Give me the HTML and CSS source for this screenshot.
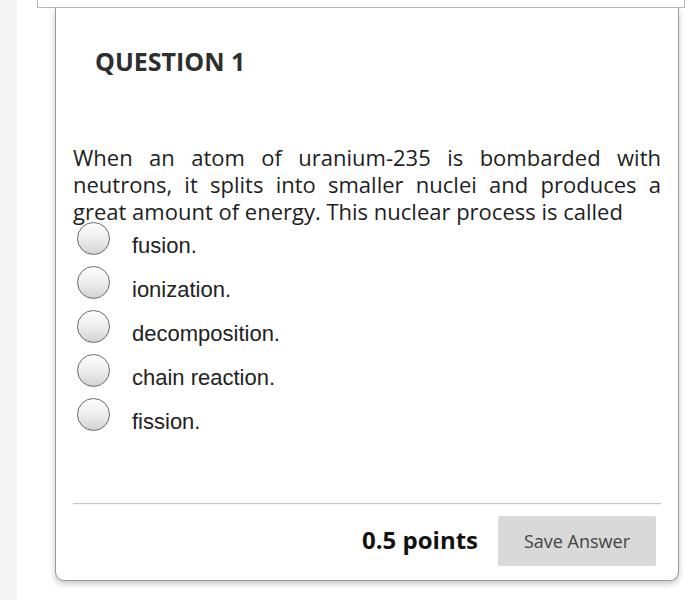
FILE: index.html
```html
<!DOCTYPE html>
<html lang="en">
<head>
<meta charset="utf-8">
<title>Question 1</title>
<link rel="stylesheet" href="styles.css">
</head>
<body>
<div class="page">
  <div class="rail"></div>
  <div class="content">
    <div class="topbox"></div>
    <div class="card">
      <h2 class="qtitle">QUESTION 1</h2>
      <p class="qtext">When an atom of uranium-235 is bombarded with neutrons, it splits into smaller nuclei and produces a great amount of energy. This nuclear process is called</p>
      <ul class="options">
        <li class="option"><span class="radio"></span><span class="label">fusion.</span></li>
        <li class="option"><span class="radio"></span><span class="label">ionization.</span></li>
        <li class="option"><span class="radio"></span><span class="label">decomposition.</span></li>
        <li class="option"><span class="radio"></span><span class="label">chain reaction.</span></li>
        <li class="option"><span class="radio"></span><span class="label">fission.</span></li>
      </ul>
      <div class="divider"></div>
      <div class="footer">
        <span class="points">0.5 points</span>
        <button class="save">Save Answer</button>
      </div>
    </div>
  </div>
</div>
</body>
</html>
```

FILE: styles.css
```css
html, body {
  margin: 0;
  padding: 0;
  background: #ffffff;
  overflow: hidden;
}

.page {
  display: flex;
  width: 700px;
  height: 604px;
}

.rail {
  width: 17px;
  flex: none;
  height: 600px;
  background: #f4f4f4;
}

.content {
  flex: 1;
  display: flex;
  flex-direction: column;
}

.topbox {
  box-sizing: border-box;
  margin-top: -50px;
  margin-left: 20px;
  width: 648px;
  height: 58px;
  border: 1px solid #b8b8b8;
  background: #ffffff;
}

.card {
  box-sizing: border-box;
  margin-left: 38px;
  width: 624px;
  height: 573px;
  border: 1px solid #9a9a9a;
  border-top: none;
  border-radius: 0 0 9px 9px;
  box-shadow: 0 3px 6px rgba(0, 0, 0, 0.22);
  padding: 0 17px;
  display: flex;
  flex-direction: column;
  background: #ffffff;
}

.qtitle {
  margin: 38px 0 0 22px;
  font-family: "Open Sans", sans-serif;
  font-weight: 700;
  font-size: 25px;
  line-height: 30px;
  color: #2e2e2e;
}

.qtext {
  margin: 68px 0 0 0;
  font-family: "Open Sans", sans-serif;
  font-size: 22px;
  line-height: 27px;
  color: #1e1e1e;
  text-align: justify;
}

.options {
  list-style: none;
  margin: -3px 0 0 0;
  padding: 0;
}

.option {
  display: flex;
  align-items: flex-start;
  height: 44px;
}

.radio {
  box-sizing: border-box;
  flex: none;
  width: 33px;
  height: 33px;
  margin-left: 4px;
  border: 1.5px solid #6a6a6a;
  border-radius: 50%;
  background: linear-gradient(to bottom, #ffffff 0%, #ebebeb 55%, #d2d2d2 100%);
}

.label {
  margin-left: 22px;
  padding-top: 11px;
  font-family: "Liberation Sans", Arial, sans-serif;
  font-size: 22px;
  line-height: 25px;
  color: #222222;
}

.divider {
  margin-top: 61px;
  height: 0;
  border-top: 1px solid #c6c6c6;
  border-bottom: 1px solid #f3f3f3;
}

.footer {
  display: flex;
  justify-content: flex-end;
  align-items: center;
  gap: 20px;
  margin-top: 11px;
  padding-right: 5px;
}

.points {
  margin-bottom: 4px;
  font-family: "Open Sans", sans-serif;
  font-weight: 700;
  font-size: 24px;
  color: #111111;
}

.save {
  width: 158px;
  height: 50px;
  border: none;
  border-radius: 2px;
  background: #d9d9d9;
  font-family: "Open Sans", sans-serif;
  font-size: 18px;
  color: #444444;
  padding: 0;
}
```
